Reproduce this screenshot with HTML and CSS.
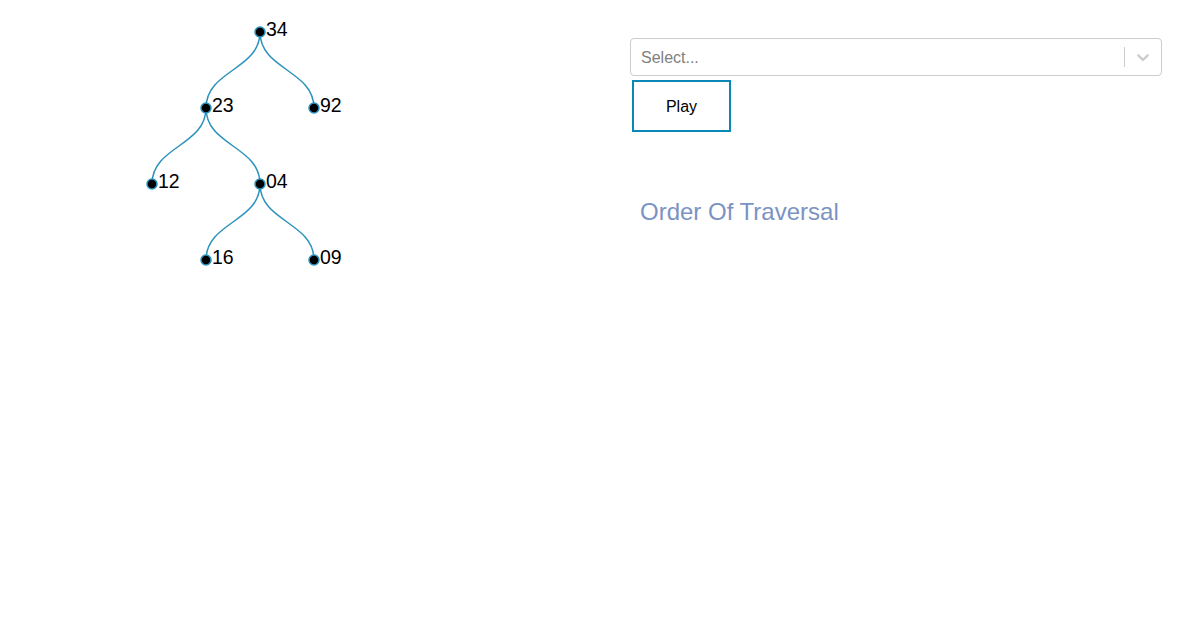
FILE: index.html
```html
<!DOCTYPE html>
<html>
<head>
<meta charset="utf-8">
<link rel="stylesheet" href="styles.css">
</head>
<body>
<div class="page">
  <div class="tree-panel">
    <svg class="tree" width="630" height="300" viewBox="0 0 630 300">
      <g class="links">
        <path d="M260,32 C260,70 206,70 206,108"/>
        <path d="M260,32 C260,70 314,70 314,108"/>
        <path d="M206,108 C206,146 152,146 152,184"/>
        <path d="M206,108 C206,146 260,146 260,184"/>
        <path d="M260,184 C260,222 206,222 206,260"/>
        <path d="M260,184 C260,222 314,222 314,260"/>
      </g>
      <g class="nodes">
        <circle cx="260" cy="32" r="5"/><text x="266" y="36">34</text>
        <circle cx="206" cy="108" r="5"/><text x="212" y="112">23</text>
        <circle cx="314" cy="108" r="5"/><text x="320" y="112">92</text>
        <circle cx="152" cy="184" r="5"/><text x="158" y="188">12</text>
        <circle cx="260" cy="184" r="5"/><text x="266" y="188">04</text>
        <circle cx="206" cy="260" r="5"/><text x="212" y="264">16</text>
        <circle cx="314" cy="260" r="5"/><text x="320" y="264">09</text>
      </g>
    </svg>
  </div>
  <div class="controls">
    <div class="select">
      <span class="placeholder">Select...</span>
      <span class="indicators">
        <span class="separator"></span>
        <svg class="chevron" width="20" height="20" viewBox="0 0 20 20"><path d="M4.516 7.548c0.436-0.446 1.043-0.481 1.576 0l3.908 3.747 3.908-3.747c0.533-0.481 1.141-0.446 1.574 0 0.436 0.445 0.408 1.197 0 1.615-0.406 0.418-4.695 4.502-4.695 4.502-0.217 0.223-0.502 0.335-0.787 0.335s-0.57-0.112-0.789-0.335c0 0-4.287-4.084-4.695-4.502s-0.436-1.17 0-1.615z"/></svg>
      </span>
    </div>
    <button class="play">Play</button>
    <h2 class="order-title">Order Of Traversal</h2>
  </div>
</div>
</body>
</html>
```
FILE: styles.css
```css
html, body {
  margin: 0;
  padding: 0;
  background: #fff;
  font-family: "Liberation Sans", Arial, sans-serif;
}
.page {
  display: flex;
  width: 1200px;
  height: 630px;
}
.tree-panel {
  width: 630px;
  flex: none;
}
.tree {
  display: block;
}
.links path {
  fill: none;
  stroke: #2a92bd;
  stroke-width: 1.5;
}
.nodes circle {
  fill: #000;
  stroke: #2a92bd;
  stroke-width: 1.5;
}
.nodes text {
  font-family: "Liberation Sans", Arial, sans-serif;
  font-size: 19.5px;
  fill: #000;
}
.controls {
  width: 532px;
  flex: none;
  padding-top: 38px;
  display: flex;
  flex-direction: column;
  align-items: flex-start;
}
.select {
  box-sizing: border-box;
  width: 532px;
  height: 38px;
  border: 1px solid #cccccc;
  border-radius: 4px;
  display: flex;
  align-items: center;
  justify-content: space-between;
  padding-left: 10px;
}
.placeholder {
  color: #808080;
  font-size: 16px;
  position: relative;
  top: 1px;
}
.indicators {
  display: flex;
  align-items: center;
  height: 100%;
}
.separator {
  width: 1px;
  height: 20px;
  background: #cccccc;
}
.chevron {
  fill: #cccccc;
  margin: 0 8px;
}
.play {
  margin: 4px 0 0 2px;
  box-sizing: border-box;
  width: 99px;
  height: 52px;
  background: #fff;
  border: 2px solid #0a87b6;
  font-family: "Liberation Sans", Arial, sans-serif;
  font-size: 16px;
  color: #000;
  padding: 2px 0 0 0;
}
.order-title {
  margin: 66px 0 0 10px;
  font-size: 24px;
  font-weight: normal;
  color: #7b93c3;
}
```
